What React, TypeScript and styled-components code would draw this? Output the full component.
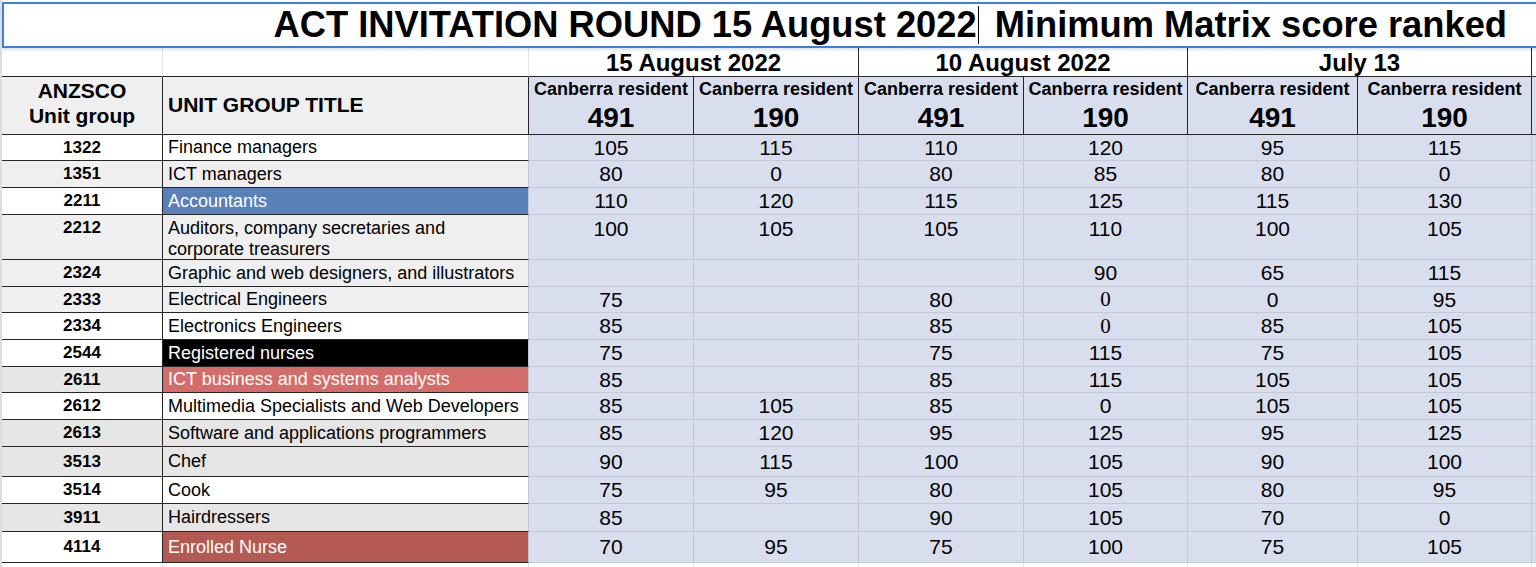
import React from "react";
import styled, { createGlobalStyle, css } from "styled-components";

const GlobalStyle = createGlobalStyle`
  html, body { margin: 0; padding: 0; background: #ffffff; overflow: hidden; }
  body { font-family: "Liberation Sans", Arial, sans-serif; color: #000; }
`;

const COLS = "161px 366px 165px 165px 165px 164px 170px 174px 1fr";
const LAV = "#d9deef";
const GRID = "#c5c9d6";
const DARK = "#262626";
const SHEETLINE = "#e2e3e6";

const Sheet = styled.div`
  width: 1536px;
  height: 567px;
  overflow: hidden;
  border-left: 2px solid #dcdde0;
  box-sizing: border-box;
  display: flex;
  flex-direction: column;
`;

const TitleBar = styled.div`
  position: relative;
  z-index: 2;
  flex: none;
  margin-top: 2px;
  margin-right: -12px;
  height: 46px;
  box-sizing: border-box;
  border: 2px solid #3d7de6;
  background: #fff;
  display: flex;
  align-items: center;
  justify-content: flex-end;
  padding-right: 39px;
  box-shadow: 0 2px 3px rgba(0, 0, 0, 0.12);
`;

const TitleText = styled.span`
  font-size: 36.3px;
  font-weight: 700;
  white-space: pre;
  line-height: 1;
`;

const Caret = styled.span`
  display: inline-block;
  width: 1px;
  height: 38px;
  background: #000;
  margin: 0 16px 0 1px;
`;

const Row = styled.div<{ $h: number }>`
  display: grid;
  grid-template-columns: ${COLS};
  height: ${(p) => p.$h}px;
  flex: none;
`;

const cellBase = css`
  box-sizing: border-box;
  display: flex;
  overflow: hidden;
  white-space: nowrap;
`;

const BlankCell = styled.div<{ $bg?: string; $right?: string; $bottom?: string }>`
  ${cellBase};
  background: ${(p) => p.$bg || "#fff"};
  border-right: 1px solid ${(p) => p.$right || SHEETLINE};
  border-bottom: 1px solid ${(p) => p.$bottom || SHEETLINE};
`;

const DateCell = styled.div`
  ${cellBase};
  grid-column: span 2;
  background: #fff;
  border-right: 1px solid ${DARK};
  border-bottom: 1px solid ${DARK};
  align-items: center;
  justify-content: center;
  font-size: 24px;
  font-weight: 700;
  padding-top: 1px;
`;

const HeadCode = styled.div`
  ${cellBase};
  background: #efefef;
  border-right: 1px solid ${DARK};
  border-bottom: 1px solid ${DARK};
  flex-direction: column;
  align-items: center;
  justify-content: center;
  padding-bottom: 5px;
  font-size: 21px;
  font-weight: 700;
  line-height: 25px;
  text-align: center;
`;

const HeadTitle = styled.div`
  ${cellBase};
  background: #efefef;
  border-right: 1px solid ${DARK};
  border-bottom: 1px solid ${DARK};
  align-items: center;
  padding: 0 0 2px 5px;
  font-size: 21px;
  font-weight: 700;
`;

const HeadScore = styled.div`
  ${cellBase};
  background: ${LAV};
  border-right: 1px solid ${DARK};
  border-bottom: 1px solid ${DARK};
  flex-direction: column;
  align-items: center;
  padding-top: 2px;
  font-weight: 700;
`;

const HeadLabel = styled.span`
  font-size: 18px;
  line-height: 20px;
`;

const HeadVisa = styled.span`
  font-size: 28px;
  line-height: 38px;
`;

const CodeCell = styled.div<{ $bg: string; $top?: boolean }>`
  ${cellBase};
  background: ${(p) => p.$bg};
  border-right: 1px solid ${DARK};
  border-bottom: 1px solid ${DARK};
  justify-content: center;
  align-items: ${(p) => (p.$top ? "flex-start" : "center")};
  padding-top: ${(p) => (p.$top ? "3px" : "0")};
  font-size: 17px;
  font-weight: 700;
`;

const TitleCell = styled.div<{ $bg: string; $fg: string; $top?: boolean }>`
  ${cellBase};
  background: ${(p) => p.$bg};
  color: ${(p) => p.$fg};
  border-right: 1px solid ${GRID};
  border-bottom: 1px solid ${DARK};
  align-items: ${(p) => (p.$top ? "flex-start" : "center")};
  padding: ${(p) => (p.$top ? "3px 0 0 5px" : "0 0 0 5px")};
  font-size: 18px;
  line-height: 21px;
  white-space: normal;
`;

const NumCell = styled.div<{ $top?: boolean; $serif?: boolean }>`
  ${cellBase};
  background: ${LAV};
  border-right: 1px solid ${GRID};
  border-bottom: 1px solid ${GRID};
  justify-content: center;
  align-items: ${(p) => (p.$top ? "flex-start" : "center")};
  padding-top: ${(p) => (p.$top ? "2px" : "0")};
  font-size: 21px;
  font-family: ${(p) =>
    p.$serif ? '"Liberation Serif", "Times New Roman", serif' : '"Liberation Sans", Arial, sans-serif'};
`;

const FillCell = styled.div<{ $bg?: string; $bottom?: string }>`
  ${cellBase};
  background: ${(p) => p.$bg || LAV};
  border-bottom: 1px solid ${(p) => p.$bottom || GRID};
`;

type Val = string | { serif: string };

interface DataRow {
  code: string;
  title: React.ReactNode;
  a: string;
  b: string;
  fg?: string;
  h: number;
  top?: boolean;
  v: Val[];
}

const W = "#ffffff";
const G1 = "#efefef";
const G2 = "#e6e6e6";

const rows: DataRow[] = [
  { code: "1322", title: "Finance managers", a: W, b: W, h: 26, v: ["105", "115", "110", "120", "95", "115"] },
  { code: "1351", title: "ICT managers", a: G1, b: G1, h: 27, v: ["80", "0", "80", "85", "80", "0"] },
  { code: "2211", title: "Accountants", a: W, b: "#5a80b9", fg: "#fff", h: 27, v: ["110", "120", "115", "125", "115", "130"] },
  {
    code: "2212",
    title: (
      <>
        Auditors, company secretaries and
        <br />
        corporate treasurers
      </>
    ),
    a: G1,
    b: G1,
    h: 45,
    top: true,
    v: ["100", "105", "105", "110", "100", "105"],
  },
  { code: "2324", title: "Graphic and web designers, and illustrators", a: G1, b: G1, h: 27, v: ["", "", "", "90", "65", "115"] },
  { code: "2333", title: "Electrical Engineers", a: G1, b: G1, h: 26, v: ["75", "", "80", { serif: "0" }, "0", "95"] },
  { code: "2334", title: "Electronics Engineers", a: W, b: W, h: 27, v: ["85", "", "85", { serif: "0" }, "85", "105"] },
  { code: "2544", title: "Registered nurses", a: W, b: "#000000", fg: "#fff", h: 27, v: ["75", "", "75", "115", "75", "105"] },
  { code: "2611", title: "ICT business and systems analysts", a: G2, b: "#d46d6a", fg: "#fff", h: 26, v: ["85", "", "85", "115", "105", "105"] },
  { code: "2612", title: "Multimedia Specialists and Web Developers", a: W, b: W, h: 27, v: ["85", "105", "85", "0", "105", "105"] },
  { code: "2613", title: "Software and applications programmers", a: G2, b: G2, h: 27, v: ["85", "120", "95", "125", "95", "125"] },
  { code: "3513", title: "Chef", a: G2, b: G2, h: 30, v: ["90", "115", "100", "105", "90", "100"] },
  { code: "3514", title: "Cook", a: W, b: W, h: 27, v: ["75", "95", "80", "105", "80", "95"] },
  { code: "3911", title: "Hairdressers", a: G2, b: G2, h: 28, v: ["85", "", "90", "105", "70", "0"] },
  { code: "4114", title: "Enrolled Nurse", a: W, b: "#b45a53", fg: "#fff", h: 31, v: ["70", "95", "75", "100", "75", "105"] },
];

const groups = ["15 August 2022", "10 August 2022", "July 13"];
const visas = ["491", "190", "491", "190", "491", "190"];

export default function App() {
  return (
    <>
      <GlobalStyle />
      <Sheet>
        <TitleBar>
          <TitleText>ACT INVITATION ROUND 15 August 2022</TitleText>
          <Caret />
          <TitleText>Minimum Matrix score ranked</TitleText>
        </TitleBar>

        <Row $h={29}>
          <BlankCell $bottom={DARK} />
          <BlankCell $bottom={DARK} $right={SHEETLINE} />
          {groups.map((g) => (
            <DateCell key={g}>{g}</DateCell>
          ))}
          <FillCell $bg="#fff" $bottom={DARK} />
        </Row>

        <Row $h={58}>
          <HeadCode>
            <span>ANZSCO</span>
            <span>Unit group</span>
          </HeadCode>
          <HeadTitle>UNIT GROUP TITLE</HeadTitle>
          {visas.map((v, i) => (
            <HeadScore key={i}>
              <HeadLabel>Canberra resident</HeadLabel>
              <HeadVisa>{v}</HeadVisa>
            </HeadScore>
          ))}
          <FillCell $bottom={DARK} />
        </Row>

        {rows.map((r) => (
          <Row key={r.code} $h={r.h}>
            <CodeCell $bg={r.a} $top={r.top}>
              {r.code}
            </CodeCell>
            <TitleCell $bg={r.b} $fg={r.fg || "#000"} $top={r.top}>
              <span>{r.title}</span>
            </TitleCell>
            {r.v.map((val, i) =>
              typeof val === "string" ? (
                <NumCell key={i} $top={r.top}>
                  {val}
                </NumCell>
              ) : (
                <NumCell key={i} $top={r.top} $serif>
                  {val.serif}
                </NumCell>
              )
            )}
            <FillCell />
          </Row>
        ))}

        <Row $h={10}>
          <BlankCell />
          <BlankCell />
          <BlankCell />
          <BlankCell />
          <BlankCell />
          <BlankCell />
          <BlankCell />
          <BlankCell />
          <FillCell $bg="#fff" $bottom={SHEETLINE} />
        </Row>
      </Sheet>
    </>
  );
}
